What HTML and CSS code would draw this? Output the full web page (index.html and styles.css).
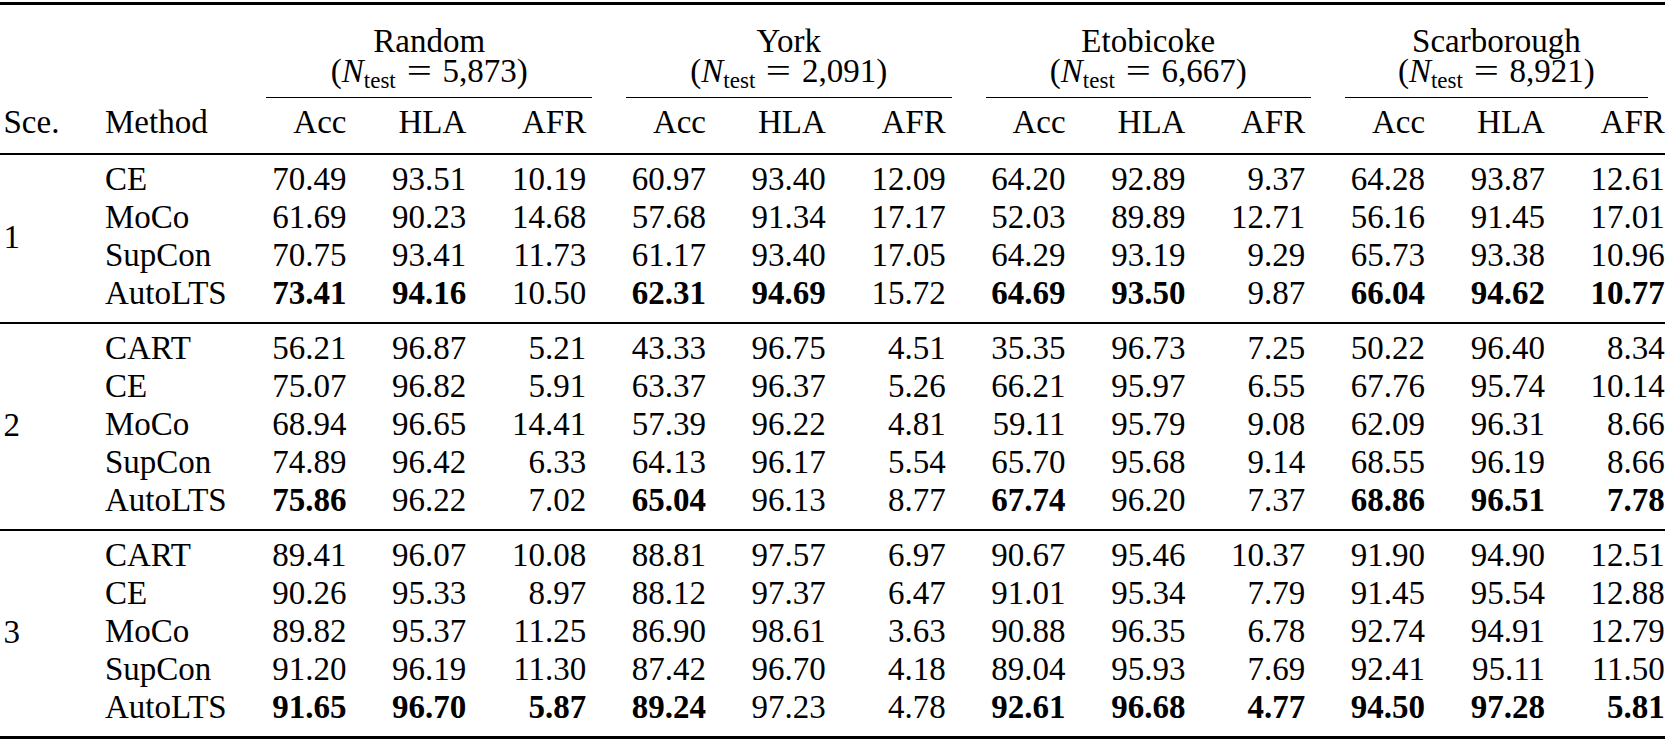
FILE: index.html
```html
<!DOCTYPE html>
<html lang="en">
<head>
<meta charset="utf-8">
<title>Results table</title>
<link rel="stylesheet" href="styles.css">
</head>
<body>
<div class="wrap">
<table class="results">
  <thead>
    <tr class="row-groups">
      <th class="c-sce"></th>
      <th class="c-method"></th>
      <th class="grp" colspan="3"><div class="grp-line grp-title">Random</div><div class="grp-line">(<i>N</i><span class="sub">test</span><span class="eq">=</span>5,873)</div><div class="cline"></div></th>
      <th class="grp" colspan="3"><div class="grp-line grp-title">York</div><div class="grp-line">(<i>N</i><span class="sub">test</span><span class="eq">=</span>2,091)</div><div class="cline"></div></th>
      <th class="grp" colspan="3"><div class="grp-line grp-title">Etobicoke</div><div class="grp-line">(<i>N</i><span class="sub">test</span><span class="eq">=</span>6,667)</div><div class="cline"></div></th>
      <th class="grp grp-last" colspan="3"><div class="grp-line grp-title">Scarborough</div><div class="grp-line">(<i>N</i><span class="sub">test</span><span class="eq">=</span>8,921)</div><div class="cline"></div></th>
    </tr>
    <tr class="row-metrics">
      <th class="c-sce">Sce.</th>
      <th class="c-method">Method</th>
      <th class="num">Acc</th><th class="num">HLA</th><th class="num">AFR</th>
      <th class="num">Acc</th><th class="num">HLA</th><th class="num">AFR</th>
      <th class="num">Acc</th><th class="num">HLA</th><th class="num">AFR</th>
      <th class="num">Acc</th><th class="num">HLA</th><th class="num last">AFR</th>
    </tr>
  </thead>
  <tbody>
    <tr class="g-first">
      <td class="c-sce sce-num" rowspan="4">1</td>
      <td class="c-method">CE</td>
      <td class="num">70.49</td><td class="num">93.51</td><td class="num">10.19</td>
      <td class="num">60.97</td><td class="num">93.40</td><td class="num">12.09</td>
      <td class="num">64.20</td><td class="num">92.89</td><td class="num">9.37</td>
      <td class="num">64.28</td><td class="num">93.87</td><td class="num last">12.61</td>
    </tr>
    <tr>
      <td class="c-method">MoCo</td>
      <td class="num">61.69</td><td class="num">90.23</td><td class="num">14.68</td>
      <td class="num">57.68</td><td class="num">91.34</td><td class="num">17.17</td>
      <td class="num">52.03</td><td class="num">89.89</td><td class="num">12.71</td>
      <td class="num">56.16</td><td class="num">91.45</td><td class="num last">17.01</td>
    </tr>
    <tr>
      <td class="c-method">SupCon</td>
      <td class="num">70.75</td><td class="num">93.41</td><td class="num">11.73</td>
      <td class="num">61.17</td><td class="num">93.40</td><td class="num">17.05</td>
      <td class="num">64.29</td><td class="num">93.19</td><td class="num">9.29</td>
      <td class="num">65.73</td><td class="num">93.38</td><td class="num last">10.96</td>
    </tr>
    <tr class="g-last">
      <td class="c-method">AutoLTS</td>
      <td class="num best">73.41</td><td class="num best">94.16</td><td class="num">10.50</td>
      <td class="num best">62.31</td><td class="num best">94.69</td><td class="num">15.72</td>
      <td class="num best">64.69</td><td class="num best">93.50</td><td class="num">9.87</td>
      <td class="num best">66.04</td><td class="num best">94.62</td><td class="num best last">10.77</td>
    </tr>
  </tbody>
  <tbody>
    <tr class="g-first">
      <td class="c-sce sce-num" rowspan="5">2</td>
      <td class="c-method">CART</td>
      <td class="num">56.21</td><td class="num">96.87</td><td class="num">5.21</td>
      <td class="num">43.33</td><td class="num">96.75</td><td class="num">4.51</td>
      <td class="num">35.35</td><td class="num">96.73</td><td class="num">7.25</td>
      <td class="num">50.22</td><td class="num">96.40</td><td class="num last">8.34</td>
    </tr>
    <tr>
      <td class="c-method">CE</td>
      <td class="num">75.07</td><td class="num">96.82</td><td class="num">5.91</td>
      <td class="num">63.37</td><td class="num">96.37</td><td class="num">5.26</td>
      <td class="num">66.21</td><td class="num">95.97</td><td class="num">6.55</td>
      <td class="num">67.76</td><td class="num">95.74</td><td class="num last">10.14</td>
    </tr>
    <tr>
      <td class="c-method">MoCo</td>
      <td class="num">68.94</td><td class="num">96.65</td><td class="num">14.41</td>
      <td class="num">57.39</td><td class="num">96.22</td><td class="num">4.81</td>
      <td class="num">59.11</td><td class="num">95.79</td><td class="num">9.08</td>
      <td class="num">62.09</td><td class="num">96.31</td><td class="num last">8.66</td>
    </tr>
    <tr>
      <td class="c-method">SupCon</td>
      <td class="num">74.89</td><td class="num">96.42</td><td class="num">6.33</td>
      <td class="num">64.13</td><td class="num">96.17</td><td class="num">5.54</td>
      <td class="num">65.70</td><td class="num">95.68</td><td class="num">9.14</td>
      <td class="num">68.55</td><td class="num">96.19</td><td class="num last">8.66</td>
    </tr>
    <tr class="g-last">
      <td class="c-method">AutoLTS</td>
      <td class="num best">75.86</td><td class="num">96.22</td><td class="num">7.02</td>
      <td class="num best">65.04</td><td class="num">96.13</td><td class="num">8.77</td>
      <td class="num best">67.74</td><td class="num">96.20</td><td class="num">7.37</td>
      <td class="num best">68.86</td><td class="num best">96.51</td><td class="num best last">7.78</td>
    </tr>
  </tbody>
  <tbody>
    <tr class="g-first">
      <td class="c-sce sce-num" rowspan="5">3</td>
      <td class="c-method">CART</td>
      <td class="num">89.41</td><td class="num">96.07</td><td class="num">10.08</td>
      <td class="num">88.81</td><td class="num">97.57</td><td class="num">6.97</td>
      <td class="num">90.67</td><td class="num">95.46</td><td class="num">10.37</td>
      <td class="num">91.90</td><td class="num">94.90</td><td class="num last">12.51</td>
    </tr>
    <tr>
      <td class="c-method">CE</td>
      <td class="num">90.26</td><td class="num">95.33</td><td class="num">8.97</td>
      <td class="num">88.12</td><td class="num">97.37</td><td class="num">6.47</td>
      <td class="num">91.01</td><td class="num">95.34</td><td class="num">7.79</td>
      <td class="num">91.45</td><td class="num">95.54</td><td class="num last">12.88</td>
    </tr>
    <tr>
      <td class="c-method">MoCo</td>
      <td class="num">89.82</td><td class="num">95.37</td><td class="num">11.25</td>
      <td class="num">86.90</td><td class="num">98.61</td><td class="num">3.63</td>
      <td class="num">90.88</td><td class="num">96.35</td><td class="num">6.78</td>
      <td class="num">92.74</td><td class="num">94.91</td><td class="num last">12.79</td>
    </tr>
    <tr>
      <td class="c-method">SupCon</td>
      <td class="num">91.20</td><td class="num">96.19</td><td class="num">11.30</td>
      <td class="num">87.42</td><td class="num">96.70</td><td class="num">4.18</td>
      <td class="num">89.04</td><td class="num">95.93</td><td class="num">7.69</td>
      <td class="num">92.41</td><td class="num">95.11</td><td class="num last">11.50</td>
    </tr>
    <tr class="g-last table-end">
      <td class="c-method">AutoLTS</td>
      <td class="num best">91.65</td><td class="num best">96.70</td><td class="num best">5.87</td>
      <td class="num best">89.24</td><td class="num">97.23</td><td class="num">4.78</td>
      <td class="num best">92.61</td><td class="num best">96.68</td><td class="num best">4.77</td>
      <td class="num best">94.50</td><td class="num best">97.28</td><td class="num best last">5.81</td>
    </tr>
  </tbody>
</table>
</div>
</body>
</html>
```

FILE: styles.css
```css
html, body {
  margin: 0;
  padding: 0;
  background: #fff;
}

body {
  overflow: hidden;
}

.wrap {
  padding-top: 2px;
}

.results {
  border-collapse: separate;
  border-spacing: 0;
  font-family: "Liberation Serif", "Times New Roman", serif;
  font-size: 33px;
  line-height: 38px;
  color: #000;
  white-space: nowrap;
}

.results th,
.results td {
  padding: 0 22.8px;
  font-weight: normal;
}

.results .c-sce {
  padding-left: 3.5px;
  text-align: left;
}

.results .c-method {
  text-align: left;
}

.results .num {
  text-align: right;
}

.results .last {
  padding-right: 0;
}

.results .best {
  font-weight: bold;
}

/* header: group titles */
.row-groups th {
  border-top: 3px solid #000;
  padding-top: 0;
  vertical-align: top;
}

.results .grp {
  text-align: center;
  padding: 21px 0 0;
}

.grp-line {
  line-height: 30px;
}

.sub {
  font-size: 23px;
  line-height: 0;
  vertical-align: -6px;
}

.eq {
  display: inline-block;
  margin: 0 14px;
  transform: scaleX(1.35);
}

.cline {
  border-top: 1px solid #000;
  margin: 11px 17px 0;
}

.row-metrics th {
  padding-top: 5px;
  padding-bottom: 12px;
}

/* body groups */
.g-first td {
  border-top: 2px solid #000;
  padding-top: 5px;
}

.g-last td {
  padding-bottom: 10px;
}

.results .sce-num {
  vertical-align: middle;
  padding-top: 0;
  padding-bottom: 4px;
}

.table-end td,
tbody:last-child .sce-num {
  border-bottom: 3px solid #000;
}
```
